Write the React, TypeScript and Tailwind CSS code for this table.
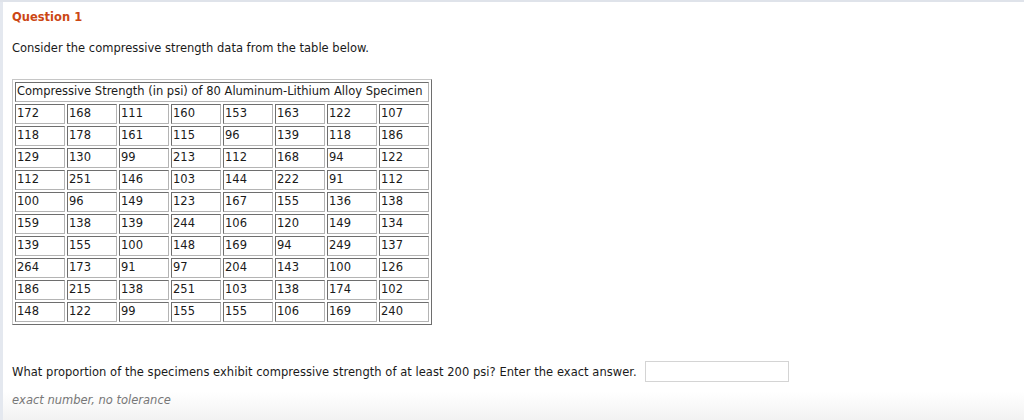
import React from "react";

const rows: number[][] = [
  [172, 168, 111, 160, 153, 163, 122, 107],
  [118, 178, 161, 115, 96, 139, 118, 186],
  [129, 130, 99, 213, 112, 168, 94, 122],
  [112, 251, 146, 103, 144, 222, 91, 112],
  [100, 96, 149, 123, 167, 155, 136, 138],
  [159, 138, 139, 244, 106, 120, 149, 134],
  [139, 155, 100, 148, 169, 94, 249, 137],
  [264, 173, 91, 97, 204, 143, 100, 126],
  [186, 215, 138, 251, 103, 138, 174, 102],
  [148, 122, 99, 155, 155, 106, 169, 240],
];

const cell =
  "h-[20px] p-0 pl-[1px] text-left align-middle leading-none border border-t-[#6e6e6e] border-l-[#6e6e6e] border-b-[#b4b4b4] border-r-[#b4b4b4]";

export default function App() {
  return (
    <div className="relative h-[420px] w-[1024px] overflow-hidden bg-white font-['DejaVu_Sans',Verdana,sans-serif] text-[11.5px] text-[#1a1a1a]">
      <div className="pointer-events-none absolute bottom-0 left-0 h-[28px] w-full bg-gradient-to-b from-white to-[#f2f2f2]" />
      <div className="relative h-[2px] bg-[#dfe3ea]" />
      <div className="relative flex h-[418px]">
        <div className="w-[3px] bg-[#e4e8ef]" />
        <div className="flex-1 pl-[9px]">
          <h2 className="mt-[8px] text-[11.5px] font-bold leading-[14px] text-[#cc4714]">Question 1</h2>
          <p className="mt-[17px] leading-[14px]">Consider the compressive strength data from the table below.</p>
          <table className="mt-[24px] w-[420px] table-fixed border-separate border-spacing-[2px] border border-t-[#c6c6c6] border-l-[#c6c6c6] border-b-[#6e6e6e] border-r-[#6e6e6e]">
            <tbody>
              <tr>
                <td colSpan={8} className={cell + " whitespace-nowrap"}>
                  Compressive Strength (in psi) of 80 Aluminum-Lithium Alloy Specimen
                </td>
              </tr>
              {rows.map((r, i) => (
                <tr key={i}>
                  {r.map((v, j) => (
                    <td key={j} className={cell}>
                      {v}
                    </td>
                  ))}
                </tr>
              ))}
            </tbody>
          </table>
          <div className="mt-[36px] flex items-center">
            <span className="leading-[14px] tracking-[0.04px]">
              What proportion of the specimens exhibit compressive strength of at least 200 psi? Enter the exact answer.
            </span>
            <input
              type="text"
              className="ml-[8px] h-[21px] w-[144px] border border-[#d4d4d4] bg-white outline-none"
            />
          </div>
          <p className="mt-[11px] italic leading-[14px] text-[#777]">exact number, no tolerance</p>
        </div>
      </div>
    </div>
  );
}
